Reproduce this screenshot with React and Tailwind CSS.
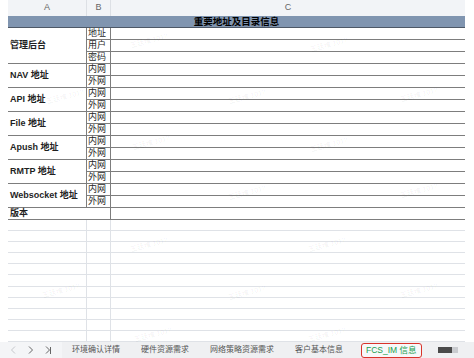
const groups = [
  { name: '管理后台', rows: ['地址', '用户', '密码'] },
  { name: 'NAV 地址', rows: ['内网', '外网'] },
  { name: 'API 地址', rows: ['内网', '外网'] },
  { name: 'File 地址', rows: ['内网', '外网'] },
  { name: 'Apush 地址', rows: ['内网', '外网'] },
  { name: 'RMTP 地址', rows: ['内网', '外网'] },
  { name: 'Websocket 地址', rows: ['内网', '外网'] },
];

const tabs = ['环境确认详情', '硬件资源需求', '网络策略资源需求', '客户基本信息'];

const marks = [
  [130, 36], [310, 40], [46, 92], [228, 92], [400, 90],
  [132, 138], [310, 140], [228, 188], [400, 186],
  [130, 240], [308, 240], [42, 286], [228, 288], [400, 286],
  [134, 330], [308, 330],
];

function GroupRows({ group }) {
  return (
    <div className="flex">
      <div className="w-[79px] flex items-center pl-[2px] font-bold text-[9px] whitespace-nowrap border-r border-b border-[#7d7d7d]">
        {group.name}
      </div>
      <div className="flex flex-col">
        {group.rows.map((r, i) => (
          <div key={i} className="flex h-[12px]">
            <div className="w-[24px] pl-[1px] text-[9px] leading-[11px] border-r border-b border-[#7d7d7d]">{r}</div>
            <div className="w-[354px] border-b border-[#7d7d7d]" />
          </div>
        ))}
      </div>
    </div>
  );
}

function Chev({ dir, color }) {
  return (
    <svg width="7" height="8" viewBox="0 0 7 8" fill="none" stroke={color} strokeWidth="1">
      {dir === 'left' ? <path d="M5 0.5 L1.5 4 L5 7.5" /> : <path d="M2 0.5 L5.5 4 L2 7.5" />}
    </svg>
  );
}

export default function App() {
  return (
    <div
      className="relative w-[474px] h-[358px] bg-white overflow-hidden flex flex-col text-[#1f1f1f]"
      style={{ fontFamily: '"Liberation Sans", "Noto Sans CJK SC", sans-serif' }}
    >
      <div className="flex flex-col pl-[8px] flex-1">
        {/* column letters */}
        <div className="flex h-[16px] w-[457px] bg-[#f2f4f7] text-[9px] text-[#666]">
          <div className="w-[79px] flex items-center justify-center border-r border-[#dde0e5]">A</div>
          <div className="w-[24px] flex items-center justify-center border-r border-[#dde0e5]">B</div>
          <div className="w-[354px] flex items-center justify-center">C</div>
        </div>

        {/* title */}
        <div className="h-[12px] w-[457px] bg-[#8095b0] border-b border-[#4d5866] flex items-center justify-center font-bold text-[9.5px] leading-[11px] text-black">
          重要地址及目录信息
        </div>

        {groups.map((g, i) => (
          <GroupRows key={i} group={g} />
        ))}

        {/* 版本 */}
        <div className="flex h-[12px]">
          <div className="w-[103px] pl-[2px] font-bold text-[9px] leading-[11px] border-r border-b border-[#7d7d7d]">版本</div>
          <div className="w-[354px] border-b border-[#7d7d7d]" />
        </div>

        {/* empty rows */}
        <div className="flex flex-col flex-1">
          {Array.from({ length: 11 }).map((_, i) => (
            <div key={i} className="flex flex-1 w-[457px]">
              <div className="w-[79px] border-r border-b border-[#dfe2e7]" />
              <div className="w-[24px] border-r border-b border-[#dfe2e7]" />
              <div className="w-[354px] border-b border-[#dfe2e7]" />
            </div>
          ))}
        </div>
      </div>

      {/* sheet tabs */}
      <div className="h-[16px] flex items-center bg-[#eff0f2] text-[8px] text-[#555]">
        <div className="w-[62px] h-full flex items-center bg-[#f4f5f7]">
          <span className="ml-[10px] flex"><Chev dir="left" color="#c4c6ca" /></span>
          <span className="ml-[10px] flex"><Chev dir="right" color="#666" /></span>
          <span className="ml-[10px] flex items-center">
            <Chev dir="right" color="#666" />
            <span className="w-[1px] h-[7px] bg-[#666] -ml-[1px]" />
          </span>
        </div>
        {tabs.map((t) => (
          <div key={t} className="px-[10px] h-full flex items-center mr-[1px]">{t}</div>
        ))}
        <div className="ml-[7px] h-[15px] px-[4px] flex items-center rounded-[3px] border-[1.5px] border-[#d9342b] bg-[#f7f8f9] text-[#1a9e50] text-[8.5px]">
          FCS_IM 信息
        </div>
        <div className="ml-[16px] flex items-center">
          <div className="w-[14px] h-[6px] bg-[#4a4a4a]" />
          <div className="w-[6px] h-[6px] bg-[#c9cbcf]" />
        </div>
      </div>

      {/* watermarks */}
      {marks.map(([x, y], i) => (
        <div
          key={i}
          className="absolute text-[7px] text-[#000]/[0.07] -rotate-[15deg] pointer-events-none whitespace-nowrap"
          style={{ left: x, top: y }}
        >
          王廷维 1017
        </div>
      ))}
    </div>
  );
}
